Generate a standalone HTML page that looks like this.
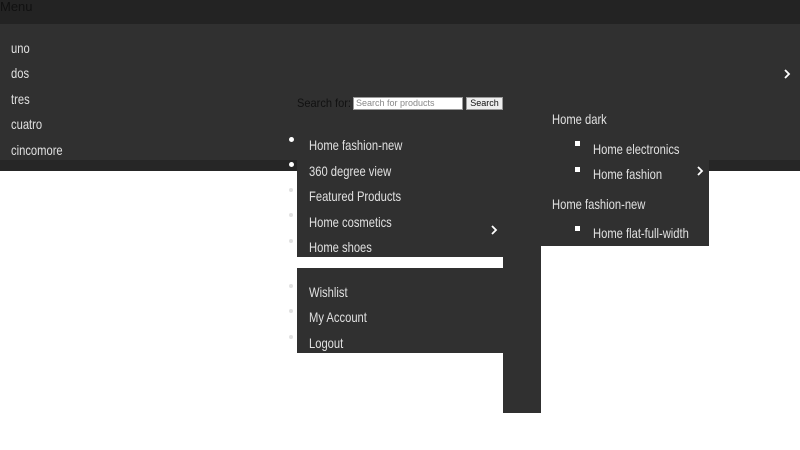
<!DOCTYPE html>
<html><head><style>
*{margin:0;padding:0;box-sizing:border-box}
body{width:800px;height:450px;background:#fff;position:relative;overflow:hidden;font-family:"Liberation Sans",sans-serif}
.a{position:absolute}
.t{position:absolute;color:#e0e0e0;font-size:14px;white-space:nowrap;line-height:14px;transform:scaleX(.8);transform-origin:left top}
.d{position:absolute;width:5px;height:5px;border-radius:50%;background:#fff}
.g{position:absolute;width:4px;height:4px;border-radius:50%;background:#e2e2e2}
.s{position:absolute;width:5px;height:5px;background:#fff}
.ch{position:absolute;width:8px;height:12px}
</style></head><body>
<div class="a" style="left:0;top:0;width:800px;height:24px;background:#232323"></div>
<div class="a" style="left:0;top:-1px;font-size:13px;color:#111">Menu</div>
<div class="a" style="left:0;top:24px;width:800px;height:136px;background:#303030"></div>
<div class="a" style="left:0;top:160px;width:800px;height:11px;background:#262626"></div>
<div class="t" style="left:11px;top:41px">uno</div>
<div class="t" style="left:11px;top:66px">dos</div>
<div class="t" style="left:11px;top:92px">tres</div>
<div class="t" style="left:11px;top:117px">cuatro</div>
<div class="t" style="left:11px;top:143px">cincomore</div>
<svg class="ch" style="left:783px;top:68px" viewBox="0 0 8 12"><path d="M2 2l4 4-4 4" stroke="#fff" stroke-width="1.8" fill="none"/></svg>

<div class="a" style="left:297px;top:160px;width:206px;height:97px;background:#303030"></div>
<div class="a" style="left:297px;top:268px;width:206px;height:85px;background:#303030"></div>
<div class="a" style="left:503px;top:160px;width:38px;height:253px;background:#303030"></div>
<div class="a" style="left:541px;top:160px;width:168px;height:86px;background:#303030"></div>

<div class="a" style="left:297px;top:96px;font-size:12px;color:#111;transform:scaleX(.92);transform-origin:left top">Search for:</div>
<div class="a" style="left:353px;top:97px;width:110px;height:13px;background:#fff;border:1px solid #999;font-size:9px;color:#888;padding-left:2px;line-height:11px">Search for products</div>
<div class="a" style="left:466px;top:97px;width:37px;height:13px;background:#eee;border:1px solid #999;font-size:9px;color:#111;text-align:center;line-height:11px">Search</div>

<div class="d" style="left:289px;top:137px"></div>
<div class="d" style="left:289px;top:162px"></div>
<div class="g" style="left:289px;top:188px"></div>
<div class="g" style="left:289px;top:213px"></div>
<div class="g" style="left:289px;top:239px"></div>
<div class="g" style="left:289px;top:284px"></div>
<div class="g" style="left:289px;top:309px"></div>
<div class="g" style="left:289px;top:335px"></div>
<div class="t" style="left:309px;top:138px">Home fashion-new</div>
<div class="t" style="left:309px;top:164px">360 degree view</div>
<div class="t" style="left:309px;top:189px">Featured Products</div>
<div class="t" style="left:309px;top:215px">Home cosmetics</div>
<div class="t" style="left:309px;top:240px">Home shoes</div>
<svg class="ch" style="left:490px;top:224px" viewBox="0 0 8 12"><path d="M2 2l4 4-4 4" stroke="#fff" stroke-width="1.8" fill="none"/></svg>
<div class="t" style="left:309px;top:285px">Wishlist</div>
<div class="t" style="left:309px;top:310px">My Account</div>
<div class="t" style="left:309px;top:336px">Logout</div>

<div class="t" style="left:552px;top:112px">Home dark</div>
<div class="s" style="left:575px;top:141px"></div>
<div class="t" style="left:593px;top:142px">Home electronics</div>
<div class="s" style="left:575px;top:167px"></div>
<div class="t" style="left:593px;top:167px">Home fashion</div>
<svg class="ch" style="left:696px;top:165px" viewBox="0 0 8 12"><path d="M2 2l4 4-4 4" stroke="#fff" stroke-width="1.8" fill="none"/></svg>
<div class="t" style="left:552px;top:197px">Home fashion-new</div>
<div class="s" style="left:575px;top:226px"></div>
<div class="t" style="left:593px;top:226px">Home flat-full-width</div>
</body></html>
